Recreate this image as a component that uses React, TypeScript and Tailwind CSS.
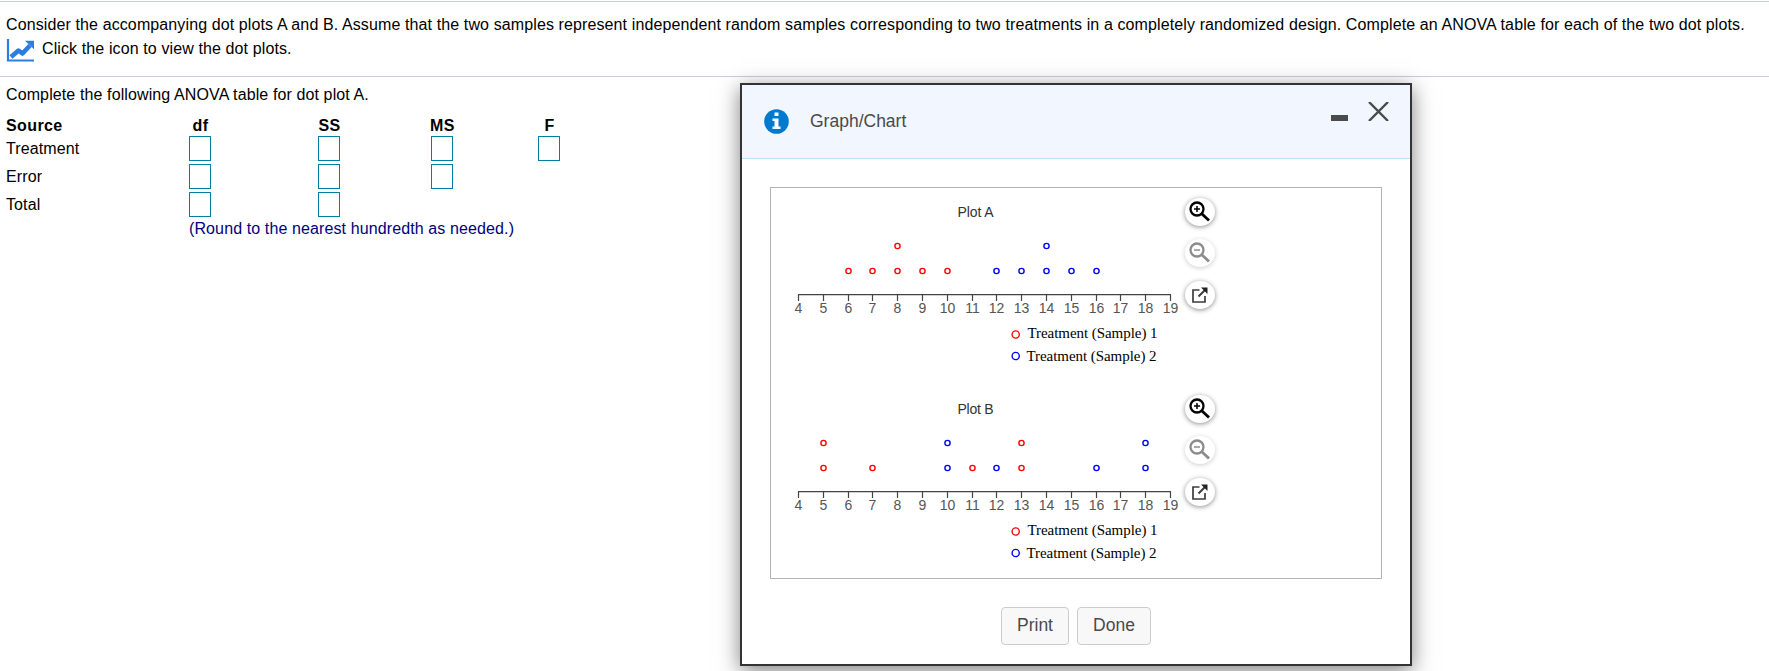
import { useState } from "react"

const sans = "font-['Liberation_Sans',Arial,sans-serif]"

const rows = [
  { label: "Treatment", cells: [true, true, true, true] },
  { label: "Error", cells: [true, true, true, false] },
  { label: "Total", cells: [true, true, false, false] },
]

const plots = [
  {
    name: "Plot A",
    s1: [[6, 1], [7, 1], [8, 1], [8, 2], [9, 1], [10, 1]],
    s2: [[12, 1], [13, 1], [14, 1], [14, 2], [15, 1], [16, 1]],
  },
  {
    name: "Plot B",
    s1: [[5, 1], [5, 2], [7, 1], [11, 1], [13, 1], [13, 2]],
    s2: [[10, 1], [10, 2], [12, 1], [16, 1], [18, 1], [18, 2]],
  },
]

// x of every tick from 4 to 19, snapped to whole pixels
const tickX = [28, 53, 78, 102, 127, 152, 177, 202, 226, 251, 276, 301, 326, 350, 375, 400]
const px = (v: number) => tickX[v - 4] - 0.5
const py = (level: number) => 108 - level * 25

function ChartIcon() {
  return (
    <svg width="28" height="24" viewBox="0 0 28 24" fill="none">
      <path d="M2 0V21.5H28" stroke="#2a7de1" strokeWidth="2.2" />
      <path d="M5 18L12.500 11.500L16.500 14.500L24 6.500" stroke="#2a7de1" strokeWidth="4.600" strokeLinejoin="round" />
      <path d="M19.500 2H28V10Z" fill="#2a7de1" stroke="#2a7de1" strokeWidth="0.5" />
    </svg>
  )
}

function ZoomIcon({ plus }: { plus: boolean }) {
  return (
    <svg width="22" height="22" viewBox="0 0 22 22" fill="none" stroke="currentColor">
      <circle cx="8" cy="8" r="6.500" strokeWidth="2.3" />
      <path d="M5 8H11" strokeWidth="1.5" />
      {plus && <path d="M8 5V11" strokeWidth="1.5" />}
      <path d="M12.500 12.500L20 19.500" strokeWidth="2.8" />
    </svg>
  )
}

function PopoutIcon() {
  return (
    <svg width="18" height="18" viewBox="0 0 18 18" fill="none" stroke="#3c3c3c">
      <path d="M8.500 4H2V16H14V10" strokeWidth="1.7" />
      <path d="M7.500 10.500L14 4" strokeWidth="1.9" />
      <path d="M10 1.500H16.500V8Z" fill="#222" stroke="none" />
    </svg>
  )
}

function DotPlot({ plot }: { plot: (typeof plots)[number] }) {
  return (
    <div className="flex h-[197px]">
      <svg width="414" height="197" viewBox="0 0 414 197" className={sans}>
        <text x="186.500" y="29" fontSize="14" textLength="36" fill="#333">
          {plot.name}
        </text>
        <path d="M27 106.700H400" stroke="#444" strokeWidth="1.300" />
        {tickX.map((x, i) => (
          <g key={i}>
            <path d={`M${x - 0.5} 107V113`} stroke="#444" strokeWidth="1.200" />
            <text x={x - 0.5} y="125" textAnchor="middle" fontSize="14" fill="#555">
              {i + 4}
            </text>
          </g>
        ))}
        <g fill="none" strokeWidth="1.400">
          {plot.s1.map(([v, l]) => (
            <circle key={`${v}-${l}`} cx={px(v)} cy={py(l)} r="2.600" stroke="#f00" />
          ))}
          {plot.s2.map(([v, l]) => (
            <circle key={`${v}-${l}`} cx={px(v)} cy={py(l)} r="2.600" stroke="#00f" />
          ))}
          <circle cx="244.700" cy="146.500" r="3.600" stroke="#f00" />
          <circle cx="244.700" cy="168" r="3.600" stroke="#00f" />
        </g>
        <g fontFamily="'Liberation Serif', 'Times New Roman', serif" fontSize="15" fill="#000">
          <text x="256.500" y="150" textLength="130">Treatment (Sample) 1</text>
          <text x="255.500" y="173" textLength="130">Treatment (Sample) 2</text>
        </g>
      </svg>
      <div className="flex flex-col gap-[13.500px] pt-[9.500px]">
        <button className="flex h-7 w-[30px] items-center justify-center rounded-[50%] bg-white text-black shadow-[0_1px_5px_rgba(0,0,0,0.45)]">
          <ZoomIcon plus />
        </button>
        <button className="flex h-7 w-[30px] items-center justify-center rounded-[50%] bg-white text-[#8c8c8c] shadow-[0_1px_5px_rgba(0,0,0,0.2)]">
          <ZoomIcon plus={false} />
        </button>
        <button className="flex h-7 w-[30px] items-center justify-center rounded-[50%] bg-white shadow-[0_1px_5px_rgba(0,0,0,0.45)]">
          <PopoutIcon />
        </button>
      </div>
    </div>
  )
}

export default function App() {
  const [open, setOpen] = useState(true)

  return (
    <div className="relative h-[671px] w-[1769px] overflow-hidden bg-white pt-px font-['Liberation_Sans',Arial,sans-serif] text-[16px] tracking-[0.113px] text-black">
      {/* Question */}
      <div className="h-[76px] border-y border-[#c8cde0] pl-1.5 pt-3">
        <p className="whitespace-nowrap leading-[22px]">
          Consider the accompanying dot plots A and B. Assume that the two samples represent independent random samples corresponding to two treatments in a completely randomized design. Complete an ANOVA table for each of the two dot plots.
        </p>
        <div className="flex gap-2 pt-0.5">
          <span className="pt-px"><ChartIcon /></span>
          <p className="leading-[22px]">Click the icon to view the dot plots.</p>
        </div>
      </div>

      {/* ANOVA table */}
      <div className="pl-1.5 pt-[7px]">
        <p className="leading-[22px]">Complete the following ANOVA table for dot plot A.</p>
        <div className="grid h-7 grid-cols-[129px_129px_129px_97px_117px] items-center pt-2 font-bold tracking-[0.4px]">
          <span>Source</span>
          <span className="pl-0.5 text-center">df</span>
          <span className="pl-0.5 text-center">SS</span>
          <span className="pl-0.5 text-center">MS</span>
          <span className="pl-0.5 text-center">F</span>
        </div>
        {rows.map((row) => (
          <div key={row.label} className="grid h-7 grid-cols-[129px_129px_129px_97px_117px] items-center">
            <span className="pt-0.5 leading-6">{row.label}</span>
            {row.cells.map((cell, i) => (
              <span key={i} className="flex justify-center">
                {cell && <input className="h-[25px] w-[22px] border border-[#007fa3]" />}
              </span>
            ))}
          </div>
        ))}
        <p className="pl-[183px] leading-[22px] text-[#000080]">(Round to the nearest hundredth as needed.)</p>
      </div>

      {/* Dialog */}
      {open && (
        <div className="absolute left-[740px] top-[83px] h-[583px] w-[672px] border-2 border-[#333] bg-white text-[17.500px] tracking-normal text-[#4a4a4a] shadow-[0_5px_20px_rgba(0,0,0,0.5)]">
          <div className="flex h-[74px] justify-between border-b border-[#bfe0f5] bg-[#f1f6ff] pl-[22px] pr-[21px]">
            <div className="flex items-center gap-[21px]">
              <svg width="25" height="25" viewBox="0 0 25 25">
                <circle cx="12.500" cy="12.500" r="12.300" fill="#007acc" />
                <path d="M10.500 3.500H14.500V7H10.500ZM8.500 9.500H14.500V17.500H16.500V20H8.500V17.500H10.500V12H8.500Z" fill="#fff" />
              </svg>
              <h2>Graph/Chart</h2>
            </div>
            <div className="flex gap-5 pt-4">
              <button className="mt-[14px] h-[6px] w-[17px] bg-[#4a4a4a]" aria-label="Minimize" />
              <button className="h-5 w-[21px]" onClick={() => setOpen(false)} aria-label="Close">
                <svg width="21" height="19" viewBox="0 0 21 19" stroke="#4a4a4a" strokeWidth="2.400">
                  <path d="M1 0L20 19M20 0L1 19" />
                </svg>
              </button>
            </div>
          </div>
          <div className="mx-7 mt-7 h-[392px] border border-[#b3b3b3]">
            {plots.map((p) => (
              <DotPlot key={p.name} plot={p} />
            ))}
          </div>
          <div className="mt-7 flex justify-center gap-2">
            <button className="h-[38px] w-[68px] rounded border border-[#ccc] bg-[#f8f8f8] pb-0.5">Print</button>
            <button className="h-[38px] w-[74px] rounded border border-[#ccc] bg-[#f8f8f8] pb-0.5">Done</button>
          </div>
        </div>
      )}
    </div>
  )
}
